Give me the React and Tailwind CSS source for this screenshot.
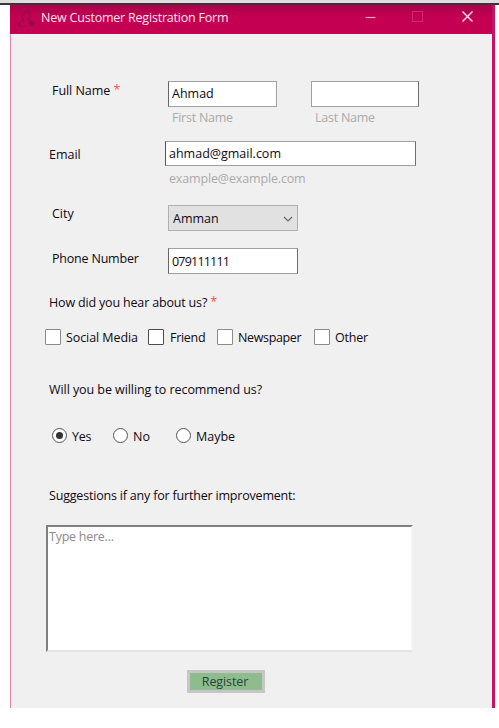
const sources = [
  { label: "Social Media", box: "mr-[5px] border-[#8a8a8a]", item: "w-[103px] tracking-[-0.08px]" },
  { label: "Friend", box: "mr-[6px] border-[#4c4c4c]", item: "w-[69px] tracking-[-0.3px]" },
  { label: "Newspaper", box: "mr-[5px] border-[#8a8a8a]", item: "w-[97px] tracking-[-0.35px]" },
  { label: "Other", box: "mr-[5px] border-[#8a8a8a]", item: "w-[80px] tracking-[-0.2px]" },
];

const answers = [
  { label: "Yes", checked: true, item: "w-[61px] tracking-[-0.3px]" },
  { label: "No", checked: false, item: "w-[63px]" },
  { label: "Maybe", checked: false, item: "w-[80px]" },
];

function TitleBar() {
  return (
    <header className="flex h-[29px] items-center bg-gradient-to-b from-[#a9004a] from-0% via-[#c30052] via-40% to-[#c30052] pl-[8px] text-white">
      <svg className="-mt-[2px] mr-[5px] h-[18px] w-[18px]" viewBox="0 0 18 18" fill="none" stroke="#8c1147" strokeWidth="1.2">
        <path d="M5.2 9.5C3 7 3.6 1.2 8 1.2s5.4 5 2.6 8.3v1l2.4 1" />
        <path d="M5.3 9.5v1.2L2 12.2c-1.2.6-1.2 2-1.2 4.3h9.5" />
        <path d="M13.5 10.5v6M10.5 13.5h6M11.4 11.4l4.2 4.2M15.6 11.4l-4.2 4.2" strokeWidth="1.3" />
      </svg>
      <h1 className="-mt-[4px] w-[320px] text-[12.5px] tracking-[-0.21px] text-[#ffe3ee]">New Customer Registration Form</h1>
      <svg className="-mt-[5px] h-4 w-[112px]" viewBox="0 0 112 16" fill="none">
        <path d="M4.5 8.5h10" stroke="#f3a5c4" strokeWidth="1.2" />
        <rect x="51.5" y="2.5" width="10" height="10" stroke="#d02a6b" />
        <path d="M101.5 2.5l10 10M111.5 2.5l-10 10" stroke="#ffd9e8" strokeWidth="1.5" />
      </svg>
    </header>
  );
}

function Required() {
  return <span className="inline-block h-4 align-top leading-[14px] text-[#ff4f4f]">*</span>;
}

function App() {
  return (
    <div className="h-[728px] w-[499px] overflow-hidden bg-white font-['Open_Sans','Noto_Sans',sans-serif] text-[12.5px] leading-4 whitespace-nowrap text-[#100814]">
      <div className="h-[3px] bg-[#dededf]" />
      <div className="h-[2px] bg-[#3a343a]" />
      <main className="ml-[10px] h-[703px] w-[485px] border-r-[3px] border-[#cb1260] bg-[#f0f0f0]">
        <TitleBar />
        <form className="h-[674px] border-t border-l border-t-[#faf0f4] border-l-[#e086ae]">
          <div className="flex pt-[46px] pl-[41px]">
            <label className="w-[116px] pt-[2px] tracking-[-0.05px]">
              Full Name <Required />
            </label>
            <div className="w-[143px]">
              <input className="block h-[26px] w-[109px] border border-[#a0a0a0] border-l-[#666] bg-white pb-[1px] pl-[3px]" defaultValue="Ahmad" />
              <p className="mt-[3px] pl-[4px] tracking-[-0.25px] text-[#aaa]">First Name</p>
            </div>
            <div>
              <input className="block h-[26px] w-[108px] border border-[#a0a0a0] border-r-[#707070] bg-white pl-[3px]" />
              <p className="mt-[3px] pl-[4px] tracking-[-0.25px] text-[#aaa]">Last Name</p>
            </div>
          </div>

          <div className="mt-[15px] flex pl-[38px]">
            <label className="w-[116px] pt-[6px]">Email</label>
            <div>
              <input className="block h-[25px] w-[251px] border border-[#a0a0a0] border-l-[#555] border-r-[#707070] bg-white pl-[3px]" defaultValue="ahmad@gmail.com" />
              <p className="mt-[5px] pl-[4px] tracking-[-0.15px] text-[#aaa]">example@example.com</p>
            </div>
          </div>

          <div className="mt-[18px] flex pl-[41px]">
            <label className="w-[116px] pt-[1px]">City</label>
            <div className="flex h-[26px] w-[130px] items-center justify-between border border-[#b0b0b0] bg-[#e1e1e1] pt-[1px] pr-[3px] pl-[4px]">
              Amman
              <svg className="h-3 w-3" viewBox="0 0 12 12" fill="none" stroke="#666" strokeWidth="1.2">
                <path d="M2 4l4 4 4-4" />
              </svg>
            </div>
          </div>

          <div className="mt-[17px] flex pl-[41px]">
            <label className="w-[116px] pt-[3px] tracking-[-0.2px]">Phone Number</label>
            <input className="h-[26px] w-[130px] border border-[#a0a0a0] border-r-[#707070] border-l-[#666] bg-white pl-[3px] tracking-[-0.8px]" defaultValue="079111111" />
          </div>

          <p className="mt-[21px] pl-[38px] tracking-[-0.17px]">
            How did you hear about us? <Required />
          </p>

          <div className="mt-[18px] flex h-4 pl-[34px]">
            {sources.map((s) => (
              <label key={s.label} className={`flex ${s.item}`}>
                <span className={`h-4 w-4 shrink-0 rounded-[1px] border bg-white ${s.box}`} />
                <span className="pt-[1px]">{s.label}</span>
              </label>
            ))}
          </div>

          <p className="mt-[37px] pl-[38px] tracking-[-0.07px]">Will you be willing to recommend us?</p>

          <div className="mt-[30px] flex h-4 pl-[41px]">
            {answers.map((a) => (
              <label key={a.label} className={`flex ${a.item}`}>
                <span className="mr-[5px] flex h-[15px] w-[15px] shrink-0 items-center justify-center rounded-full border border-[#555] bg-white">
                  {a.checked && <span className="h-[7px] w-[7px] rounded-full bg-[#333]" />}
                </span>
                <span className="pt-[1px]">{a.label}</span>
              </label>
            ))}
          </div>

          <p className="mt-[44px] pl-[38px] tracking-[-0.19px]">Suggestions if any for further improvement:</p>

          <textarea
            className="mt-[21px] ml-[35px] block h-[127px] w-[367px] resize-none border-2 border-t-[#808080] border-r-[#f5f5f5] border-b-[#e3e3e3] border-l-[#808080] bg-white pt-[2px] pl-[1px] tracking-[-0.25px] placeholder:text-[#8f8a8a]"
            placeholder="Type here..."
          />

          <button type="button" className="mt-[18px] ml-[176px] block h-[23px] w-[78px] border-[3px] border-[#c6c6c6] bg-[#8fbc8f] pr-[2px] tracking-[-0.1px] text-[#26443a]">
            Register
          </button>
        </form>
      </main>
    </div>
  );
}

export default App;
